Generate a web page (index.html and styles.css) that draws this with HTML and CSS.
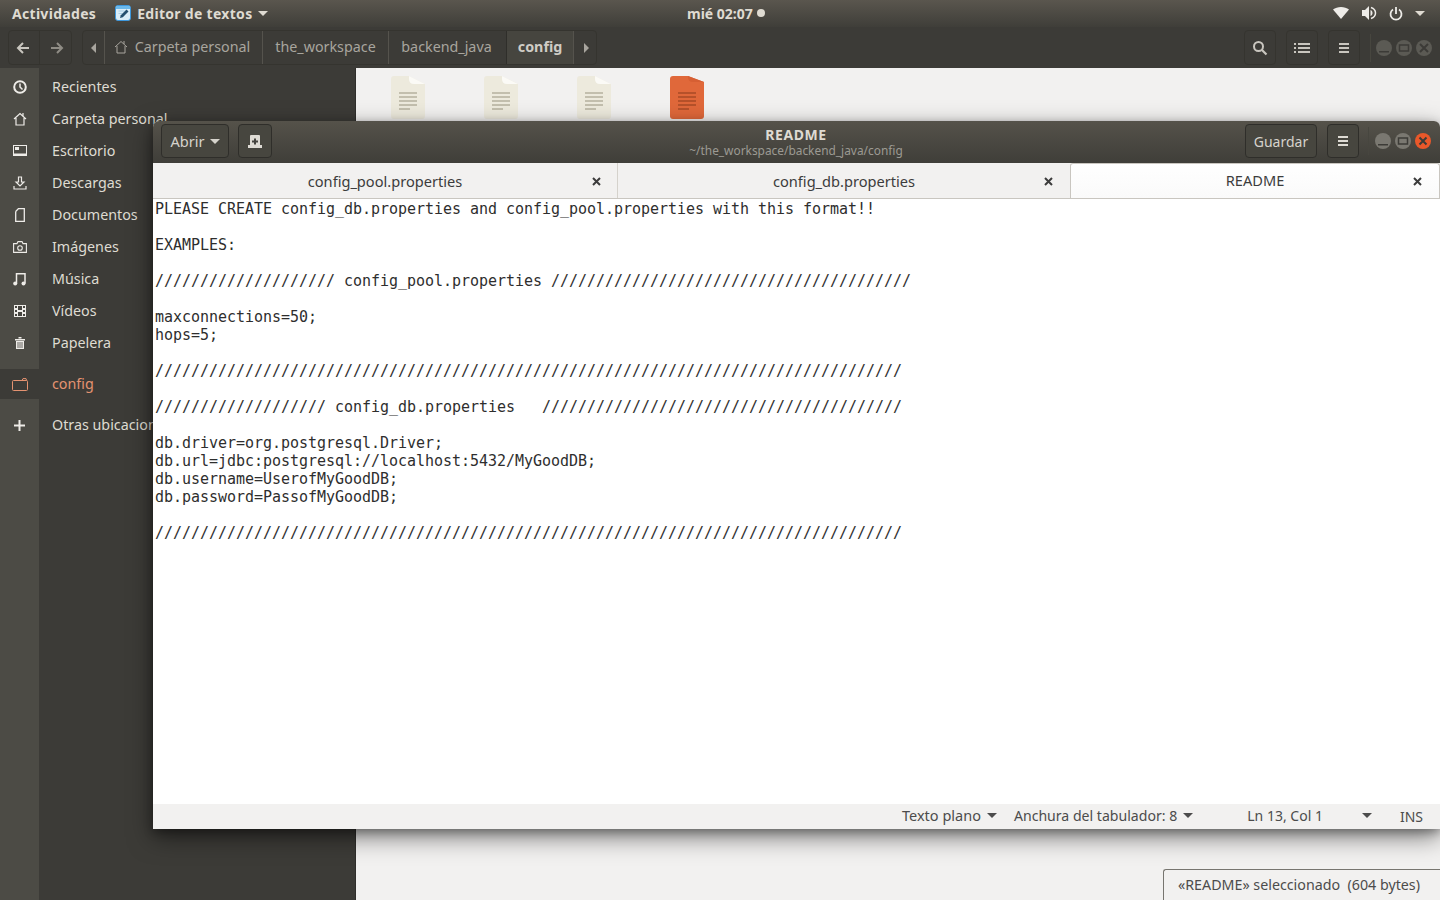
FILE: index.html
```html
<!DOCTYPE html>
<html lang="es">
<head>
    <meta charset="utf-8">
    <title>README</title>
    <link rel="stylesheet" href="styles.css">
</head>
<body>
    <div class="topbar">
        <div class="top-left">
            <span class="top-item">Actividades</span>
            <span class="top-app">
                <svg class="app-icon" width="16" height="16" viewBox="0 0 16 16"><rect x="0.500" y="0.500" width="15" height="15" rx="2.500" fill="#d9edf8" stroke="#3d97dc"/><path d="M1 1h14v3H1z" fill="#6db9ea"/><path d="M3.500 6h6M3.500 8.500h4" stroke="#a9cfe6"/><path d="M5 13l.8-2.800 5.700-5.700 2 2-5.700 5.700z" fill="#24506f"/></svg>
                <span class="top-item">Editor de textos</span>
                <i class="caret caret-top"></i>
            </span>
        </div>
        <div class="top-clock">mié 02:07<i class="dot"></i></div>
        <div class="top-right">
            <svg width="16" height="12" viewBox="0 0 16 12"><path d="M0 2.500C2 .9 5 0 8 0s6 .9 8 2.500L8 12z" fill="#eeece8"/></svg>
            <svg width="16" height="16" viewBox="0 0 16 16"><path d="M1 5h3l4-4v14l-4-4H1z" fill="#eeece8"/><path d="M10 2.500c3 1 4.500 3 4.500 5.500s-1.500 4.500-4.500 5.500" fill="none" stroke="#eeece8" stroke-width="1.500"/><path d="M9.500 5c1.500.6 2 1.700 2 3s-.5 2.400-2 3z" fill="#eeece8"/></svg>
            <svg width="14" height="15" viewBox="0 0 14 15"><path d="M4 3.500a5.500 5.500 0 1 0 6 0" fill="none" stroke="#eeece8" stroke-width="1.800"/><path d="M7 1v7" stroke="#eeece8" stroke-width="1.800"/></svg>
            <i class="caret caret-top"></i>
        </div>
    </div>

    <div class="files-head">
        <div class="btn-group nav-group">
            <span class="nav-btn nav-back"><svg width="16" height="16" viewBox="0 0 16 16"><path d="M14 8H3M8 3L3 8l5 5" fill="none" stroke="#c9c6bf" stroke-width="2"/></svg></span>
            <span class="nav-btn nav-fwd"><svg width="16" height="16" viewBox="0 0 16 16"><path d="M2 8h11M8 3l5 5-5 5" fill="none" stroke="#8f8c85" stroke-width="2"/></svg></span>
        </div>
        <div class="btn-group path-group">
            <span class="path-arrow"><i class="tri tri-left"></i></span>
            <span class="crumb crumb-home">
                <svg width="14" height="14" viewBox="0 0 14 14"><path d="M1 7l6-5.500L13 7M3 6v7h8V6M10 1v3" fill="none" stroke="#a8a59e" stroke-width="1"/></svg>
                Carpeta personal
            </span>
            <span class="crumb crumb-work">the_workspace</span>
            <span class="crumb crumb-back">backend_java</span>
            <span class="crumb crumb-active">config</span>
            <span class="path-arrow path-arrow-end"><i class="tri tri-right"></i></span>
        </div>
        <div class="head-right">
            <span class="tool-btn"><svg width="16" height="16" viewBox="0 0 16 16"><circle cx="6.500" cy="6.500" r="4.500" fill="none" stroke="#c9c6bf" stroke-width="2"/><path d="M10 10l4.500 4.500" stroke="#c9c6bf" stroke-width="2.200"/></svg></span>
            <span class="tool-btn"><svg width="16" height="14" viewBox="0 0 16 14"><path d="M0 2h2v2H0zM0 6h2v2H0zM0 10h2v2H0zM4 2h12v2H4zM4 6h12v2H4zM4 10h12v2H4z" fill="#c9c6bf"/></svg></span>
            <span class="tool-btn"><svg width="12" height="12" viewBox="0 0 12 12"><path d="M1 1h10v2H1zM1 5h10v2H1zM1 9h10v2H1z" fill="#c9c6bf"/></svg></span>
            <span class="head-sep"></span>
            <span class="win-btns win-dim">
                <i class="win-btn"><svg width="16" height="16" viewBox="0 0 16 16"><path d="M3 11h10v1.500H3z" fill="#3c3b37"/></svg></i>
                <i class="win-btn"><svg width="16" height="16" viewBox="0 0 16 16"><rect x="3.500" y="5" width="9" height="6" fill="none" stroke="#3c3b37" stroke-width="1.500"/></svg></i>
                <i class="win-btn"><svg width="16" height="16" viewBox="0 0 16 16"><path d="M4 4l8 8M12 4l-8 8" stroke="#3c3b37" stroke-width="2"/></svg></i>
            </span>
        </div>
    </div>

    <div class="files-body">
        <div class="sidebar">
            <div class="side-row"><span class="side-ico"><svg width="14" height="14" viewBox="0 0 14 14"><circle cx="7" cy="7" r="5.800" fill="none" stroke="#eeece8" stroke-width="2"/><path d="M7 3.500V7l2.500 2.500" fill="none" stroke="#eeece8" stroke-width="1.500"/></svg></span><span>Recientes</span></div>
            <div class="side-row"><span class="side-ico"><svg width="14" height="14" viewBox="0 0 14 14"><path d="M1 7l6-5.500L13 7M3 6v7h8V6M10 1v3" fill="none" stroke="#eeece8" stroke-width="1.200"/></svg></span><span>Carpeta personal</span></div>
            <div class="side-row"><span class="side-ico"><svg width="14" height="12" viewBox="0 0 14 12"><rect x="0.500" y="0.500" width="13" height="10" fill="none" stroke="#eeece8"/><path d="M2 2h4v3H2zM1 8.500h12v2.500H1z" fill="#eeece8"/></svg></span><span>Escritorio</span></div>
            <div class="side-row"><span class="side-ico"><svg width="14" height="14" viewBox="0 0 14 14"><path d="M5.500 1h3v5H11L7 10 3 6h2.500zM1 10v3h12v-3" fill="none" stroke="#eeece8" stroke-width="1.200"/></svg></span><span>Descargas</span></div>
            <div class="side-row"><span class="side-ico"><svg width="10" height="14" viewBox="0 0 10 14"><path d="M.7 3.500V13.400H9.300V.6H3.500L.7 3.500" fill="none" stroke="#eeece8" stroke-width="1.300"/></svg></span><span>Documentos</span></div>
            <div class="side-row"><span class="side-ico"><svg width="14" height="12" viewBox="0 0 14 12"><path d="M.6 2.600h3.400L5 .6h4l1 2h3.400v8.800H.6z" fill="none" stroke="#eeece8" stroke-width="1.100"/><circle cx="7" cy="7" r="2.300" fill="none" stroke="#eeece8" stroke-width="1.100"/></svg></span><span>Imágenes</span></div>
            <div class="side-row"><span class="side-ico"><svg width="13" height="14" viewBox="0 0 13 14"><path d="M3.500 11.500V1.800h8.500v9.700" fill="none" stroke="#eeece8" stroke-width="1.500"/><circle cx="2.200" cy="11.500" r="2" fill="#eeece8"/><circle cx="10.500" cy="11.500" r="2" fill="#eeece8"/></svg></span><span>Música</span></div>
            <div class="side-row"><span class="side-ico"><svg width="12" height="12" viewBox="0 0 12 12"><path d="M0 0h12v12H0z" fill="#eeece8"/><path d="M1 1h2v2H1zM1 5h2v2H1zM1 9h2v2H1zM9 1h2v2H9zM9 5h2v2H9zM9 9h2v2H9zM4 1h4v4H4zM4 7h4v4H4z" fill="#45443f"/></svg></span><span>Vídeos</span></div>
            <div class="side-row"><span class="side-ico"><svg width="10" height="12" viewBox="0 0 10 12"><path d="M0 2h10v1.500H0zM3.500 0h3v1.500h-3zM1 4h8v8H1z" fill="#eeece8"/><path d="M3 5v6M5 5v6M7 5v6" stroke="#45443f" stroke-width=".8"/></svg></span><span>Papelera</span></div>
            <div class="side-row side-active"><span class="side-ico"><svg width="16" height="13" viewBox="0 0 16 13"><path d="M1.500 2.500h13a1 1 0 0 1 1 1v8a1 1 0 0 1-1 1h-13a1 1 0 0 1-1-1v-8a1 1 0 0 1 1-1zM10 2.500L11 .6h3l.6 1.900" fill="none" stroke="#e59371"/></svg></span><span>config</span></div>
            <div class="side-row side-other"><span class="side-ico"><svg width="11" height="11" viewBox="0 0 11 11"><path d="M4.500 0h2v4.500H11v2H6.500V11h-2V6.500H0v-2h4.500z" fill="#eeece8"/></svg></span><span>Otras ubicaciones</span></div>
        </div>
        <div class="file-area">
            <div class="file-grid">
                <svg class="doc" width="34" height="43" viewBox="0 0 34 43"><path d="M3 0h15l16 8v32a3 3 0 0 1-3 3H3a3 3 0 0 1-3-3V3a3 3 0 0 1 3-3z" fill="#edeadd"/><path d="M18 0l16 8H23q-5 0-5-5z" fill="#fbfaf6"/><path d="M8 17h18M8 21h18M8 25h18M8 29h18M8 33h11" stroke="#b5b19f" stroke-width="1.300"/></svg>
                <svg class="doc" width="34" height="43" viewBox="0 0 34 43"><path d="M3 0h15l16 8v32a3 3 0 0 1-3 3H3a3 3 0 0 1-3-3V3a3 3 0 0 1 3-3z" fill="#edeadd"/><path d="M18 0l16 8H23q-5 0-5-5z" fill="#fbfaf6"/><path d="M8 17h18M8 21h18M8 25h18M8 29h18M8 33h11" stroke="#b5b19f" stroke-width="1.300"/></svg>
                <svg class="doc" width="34" height="43" viewBox="0 0 34 43"><path d="M3 0h15l16 8v32a3 3 0 0 1-3 3H3a3 3 0 0 1-3-3V3a3 3 0 0 1 3-3z" fill="#edeadd"/><path d="M18 0l16 8H23q-5 0-5-5z" fill="#fbfaf6"/><path d="M8 17h18M8 21h18M8 25h18M8 29h18M8 33h11" stroke="#b5b19f" stroke-width="1.300"/></svg>
                <svg class="doc" width="34" height="43" viewBox="0 0 34 43"><path d="M3 0h15l16 6v34a3 3 0 0 1-3 3H3a3 3 0 0 1-3-3V3a3 3 0 0 1 3-3z" fill="#e0683a"/><path d="M18 0l16 6H23q-5 0-5-5z" fill="#d65f33"/><path d="M8 17h18M8 21h18M8 25h18M8 29h18M8 33h11" stroke="#a84a26" stroke-width="1.300"/></svg>
            </div>
        </div>
    </div>

    <div class="status-pop">«README» seleccionado&nbsp; (604 bytes)</div>

    <div class="gedit">
        <div class="gedit-head">
            <div class="gedit-left">
                <span class="g-btn g-open">Abrir<i class="caret caret-btn"></i></span>
                <span class="g-btn g-new"><svg width="14" height="13" viewBox="0 0 14 13"><path d="M3 0h8a1 1 0 0 1 1 1v9h2v3H0v-3h2V1a1 1 0 0 1 1-1z" fill="#dedbd4"/><path d="M6 3.500h2v2h2v2H8v2H6v-2H4v-2h2z" fill="#45443f"/></svg></span>
            </div>
            <div class="gedit-title">
                <div class="title-main">README</div>
                <div class="title-sub">~/the_workspace/backend_java/config</div>
            </div>
            <div class="gedit-right">
                <span class="g-btn g-save">Guardar</span>
                <span class="g-btn g-menu"><svg width="12" height="12" viewBox="0 0 12 12"><path d="M1 1h10v2H1zM1 5h10v2H1zM1 9h10v2H1z" fill="#dedbd4"/></svg></span>
                <span class="head-sep"></span>
                <span class="win-btns">
                    <i class="win-btn"><svg width="16" height="16" viewBox="0 0 16 16"><path d="M3 11h10v1.500H3z" fill="#3c3b37"/></svg></i>
                    <i class="win-btn"><svg width="16" height="16" viewBox="0 0 16 16"><rect x="3.500" y="5" width="9" height="6" fill="none" stroke="#3c3b37" stroke-width="1.500"/></svg></i>
                    <i class="win-btn win-close"><svg width="16" height="16" viewBox="0 0 16 16"><path d="M4.500 4.500l7 7M11.500 4.500l-7 7" stroke="#3c3b37" stroke-width="2"/></svg></i>
                </span>
            </div>
        </div>
        <div class="tabs">
            <div class="tab tab-one"><span>config_pool.properties</span><svg class="tab-x" width="9" height="9" viewBox="0 0 9 9"><path d="M1 1l7 7M8 1L1 8" stroke="#3c3c3c" stroke-width="2"/></svg></div>
            <div class="tab tab-two"><span>config_db.properties</span><svg class="tab-x" width="9" height="9" viewBox="0 0 9 9"><path d="M1 1l7 7M8 1L1 8" stroke="#3c3c3c" stroke-width="2"/></svg></div>
            <div class="tab tab-three"><span>README</span><svg class="tab-x" width="9" height="9" viewBox="0 0 9 9"><path d="M1 1l7 7M8 1L1 8" stroke="#3c3c3c" stroke-width="2"/></svg></div>
        </div>
        <pre class="editor">PLEASE CREATE config_db.properties and config_pool.properties with this format!!

EXAMPLES:

//////////////////// config_pool.properties ////////////////////////////////////////

maxconnections=50;
hops=5;

///////////////////////////////////////////////////////////////////////////////////

/////////////////// config_db.properties   ////////////////////////////////////////

db.driver=org.postgresql.Driver;
db.url=jdbc:postgresql://localhost:5432/MyGoodDB;
db.username=UserofMyGoodDB;
db.password=PassofMyGoodDB;

///////////////////////////////////////////////////////////////////////////////////
</pre>
        <div class="gedit-status">
            <span class="st-item st-lang">Texto plano<i class="caret caret-st"></i></span>
            <span class="st-item st-tab">Anchura del tabulador: 8<i class="caret caret-st"></i></span>
            <span class="st-item st-pos">Ln 13, Col 1</span>
            <i class="caret caret-st st-arrow"></i>
            <span class="st-item st-ins">INS</span>
        </div>
    </div>
</body>
</html>
```

FILE: styles.css
```css
html, body {
    margin: 0;
    height: 100%;
}
body {
    width: 1440px;
    height: 900px;
    overflow: hidden;
    position: relative;
    font-family: "Noto Sans", "Open Sans", sans-serif;
    font-size: 14px;
    background: #f2f1f0;
}
i {
    font-style: normal;
}
svg {
    display: block;
}

/* top panel */
.topbar {
    height: 27px;
    box-sizing: border-box;
    background: linear-gradient(#5a564e, #3f3e39);
    color: #dfdbd2;
    font-weight: 700;
    font-size: 14px;
    display: flex;
    align-items: center;
    justify-content: space-between;
    padding: 0 15px 1px 12px;
    position: relative;
}
.top-left {
    display: flex;
    align-items: center;
    gap: 19px;
}
.top-item {
    letter-spacing: .3px;
}
.top-app {
    display: flex;
    align-items: center;
    gap: 6px;
}
.top-clock {
    position: absolute;
    left: 687px;
    display: flex;
    align-items: center;
    gap: 4px;
}
.dot {
    width: 8px;
    height: 8px;
    border-radius: 50%;
    background: #dfdbd2;
}
.top-right {
    display: flex;
    align-items: center;
    gap: 12px;
}
.caret {
    display: inline-block;
    width: 0;
    height: 0;
    border-left: 5px solid transparent;
    border-right: 5px solid transparent;
    border-top: 5px solid #dfdbd2;
}

/* files window header */
.files-head {
    height: 41px;
    background: #3c3b37;
    display: flex;
    align-items: center;
    padding: 0 8px;
    box-sizing: border-box;
    color: #a8a59e;
    font-size: 14.300px;
}
.btn-group {
    display: flex;
    height: 35px;
    border: 1px solid #35342f;
    border-radius: 4px;
    box-sizing: border-box;
}
.nav-group {
    width: 64px;
}
.nav-btn {
    display: flex;
    align-items: center;
    justify-content: center;
    box-sizing: border-box;
}
.nav-back {
    width: 30px;
    padding-right: 2px;
}
.nav-fwd {
    flex: 1;
    padding-left: 3px;
    border-left: 1px solid #35342f;
}
.path-group {
    margin-left: 10px;
}
.path-arrow {
    width: 21px;
    display: flex;
    align-items: center;
    justify-content: center;
}
.tri {
    width: 0;
    height: 0;
    border-top: 5px solid transparent;
    border-bottom: 5px solid transparent;
}
.tri-left {
    border-right: 5px solid #a8a59e;
}
.tri-right {
    border-left: 5px solid #a8a59e;
}
.crumb {
    display: flex;
    align-items: center;
    justify-content: center;
    gap: 6px;
    box-sizing: border-box;
    padding-bottom: 2px;
    border-left: 1px solid #55534d;
    white-space: nowrap;
}
.crumb-home {
    width: 158px;
    gap: 7px;
    padding-right: 3px;
}
.crumb-work {
    width: 126px;
}
.crumb-back {
    width: 118px;
    padding-right: 2px;
}
.crumb-active {
    width: 67px;
    background: #46453f;
    color: #cfccc5;
    font-weight: 700;
    border-left: 1px solid #2f2e2a;
}
.path-arrow-end {
    width: 23px;
    box-sizing: border-box;
    padding-left: 3px;
    border-left: 1px solid #55534d;
}
.head-right {
    margin-left: auto;
    display: flex;
    align-items: center;
    gap: 10px;
}
.tool-btn {
    width: 32px;
    height: 35px;
    border: 1px solid #35342f;
    border-radius: 4px;
    box-sizing: border-box;
    display: flex;
    align-items: center;
    justify-content: center;
}
.head-sep {
    width: 1px;
    height: 28px;
    background: #47463f;
}
.win-btns {
    display: flex;
    gap: 4px;
}
.head-right .win-btns {
    margin-left: -5px;
}
.gedit-right .win-btns {
    margin-left: -3px;
}
.win-btn {
    width: 16px;
    height: 16px;
    border-radius: 50%;
    background: #7a7871;
    display: block;
}
.win-dim .win-btn {
    background: #5b5a54;
}
.win-close {
    background: #e9582a;
}

/* files window body */
.files-body {
    display: flex;
    height: 832px;
}
.sidebar {
    width: 356px;
    flex: none;
    box-sizing: border-box;
    border-right: 1px solid #2f2e2b;
    background: linear-gradient(to right, #4c4b45 39px, #3c3b37 39px);
    color: #dfdbd2;
    font-size: 14.300px;
    padding-top: 2px;
}
.side-row {
    height: 32px;
    box-sizing: border-box;
    display: flex;
    align-items: center;
}
.side-ico {
    width: 39px;
    flex: none;
    display: flex;
    justify-content: center;
    margin-right: 13px;
    padding-top: 2px;
}
.side-active {
    height: 30px;
    margin-top: 11px;
    padding-bottom: 2px;
    background: #3c3b37;
    color: #e59371;
}
.side-other {
    margin-top: 9px;
    white-space: nowrap;
}
.file-area {
    flex: 1;
    background: #f2f1f0;
}
.file-grid {
    display: flex;
    gap: 59px;
    padding: 8px 0 0 35px;
}

.status-pop {
    position: absolute;
    left: 1163px;
    top: 869px;
    width: 277px;
    height: 31px;
    box-sizing: border-box;
    padding: 5px 0 0 14px;
    border: 1px solid #77756f;
    border-right: 0;
    border-bottom: 0;
    border-top-left-radius: 3px;
    background: #f2f1f0;
    color: #4c4c4c;
    font-size: 14.250px;
    white-space: nowrap;
}

/* gedit window */
.gedit {
    position: absolute;
    left: 153px;
    top: 121px;
    width: 1287px;
    height: 708px;
    background: #fff;
    border-radius: 6px 6px 0 0;
    box-shadow: 0 8px 24px rgba(0, 0, 0, .5), 0 3px 10px rgba(0, 0, 0, .3);
    display: flex;
    flex-direction: column;
    overflow: hidden;
}
.gedit-head {
    height: 42px;
    flex: none;
    box-sizing: border-box;
    background: linear-gradient(#55524a, #3f3e39);
    display: flex;
    align-items: center;
    justify-content: space-between;
    padding: 0 9px 2px 8px;
    color: #dfdbd2;
    position: relative;
}
.gedit-left {
    display: flex;
    align-items: center;
    gap: 9px;
}
.gedit-right {
    display: flex;
    align-items: center;
    gap: 9px;
}
.g-btn {
    height: 34px;
    box-sizing: border-box;
    border: 1px solid #2f2e2a;
    border-radius: 4px;
    background: #47463f;
    display: flex;
    align-items: center;
    justify-content: center;
    font-size: 14px;
    color: #d6d3cc;
}
.g-open {
    width: 68px;
    gap: 5px;
    font-size: 14.600px;
}
.g-new {
    width: 34px;
}
.g-save {
    width: 72px;
    margin-right: 1px;
}
.g-menu {
    width: 32px;
}
.gedit-title {
    position: absolute;
    left: 442px;
    width: 402px;
    margin-top: 3px;
    text-align: center;
}
.title-main {
    font-weight: 700;
    font-size: 14px;
    letter-spacing: .6px;
    line-height: 15px;
    color: #dfdbd2;
}
.title-sub {
    font-size: 11.900px;
    line-height: 15px;
    padding-top: 1px;
    color: #9c9a93;
}
.tabs {
    height: 36px;
    flex: none;
    display: flex;
    background: #f2f1f0;
    border-bottom: 1px solid #c9c6c0;
    box-sizing: border-box;
    color: #3c3c3c;
    font-size: 14.600px;
}
.tab {
    display: flex;
    align-items: center;
    justify-content: center;
    position: relative;
    box-sizing: border-box;
}
.tab-one {
    width: 465px;
    padding-top: 1px;
    border-right: 1px solid #d5d2cc;
}
.tab-one .tab-x {
    right: 16px;
}
.tab-two {
    width: 452px;
    padding-top: 1px;
}
.tab-three {
    flex: 1;
    background: linear-gradient(#fff, #fafafa);
    border: 1px solid #c9c6c0;
    border-bottom: 0;
    border-radius: 3px 3px 0 0;
    padding-bottom: 2px;
}
.tab-three .tab-x {
    right: 17px;
    top: 13px;
}
.tab-x {
    position: absolute;
    right: 17px;
    top: 14px;
}
.editor {
    flex: 1;
    margin: 0;
    padding: 1px 0 0 2px;
    font-family: "DejaVu Sans Mono", monospace;
    font-size: 15px;
    letter-spacing: -.03px;
    line-height: 18px;
    color: #2e2e2e;
    background: #fff;
    overflow: hidden;
}
.gedit-status {
    height: 25px;
    flex: none;
    box-sizing: border-box;
    background: #f2f1f0;
    color: #4c4c4c;
    font-size: 14px;
    display: flex;
    align-items: center;
    position: relative;
    padding: 0 0 2px 749px;
}
.st-item {
    display: flex;
    align-items: center;
    gap: 6px;
    white-space: nowrap;
}
.caret-st {
    border-top-color: #4c4c4c;
}
.caret-btn {
    border-top-color: #d6d3cc;
}
.st-lang {
    font-size: 14.500px;
    padding-bottom: 1px;
}
.st-tab {
    margin-left: 17px;
    font-size: 14.100px;
}
.st-pos {
    margin-left: 54px;
}
.st-arrow {
    margin-left: 39px;
}
.st-ins {
    margin-left: 28px;
    padding-top: 2px;
}
```
